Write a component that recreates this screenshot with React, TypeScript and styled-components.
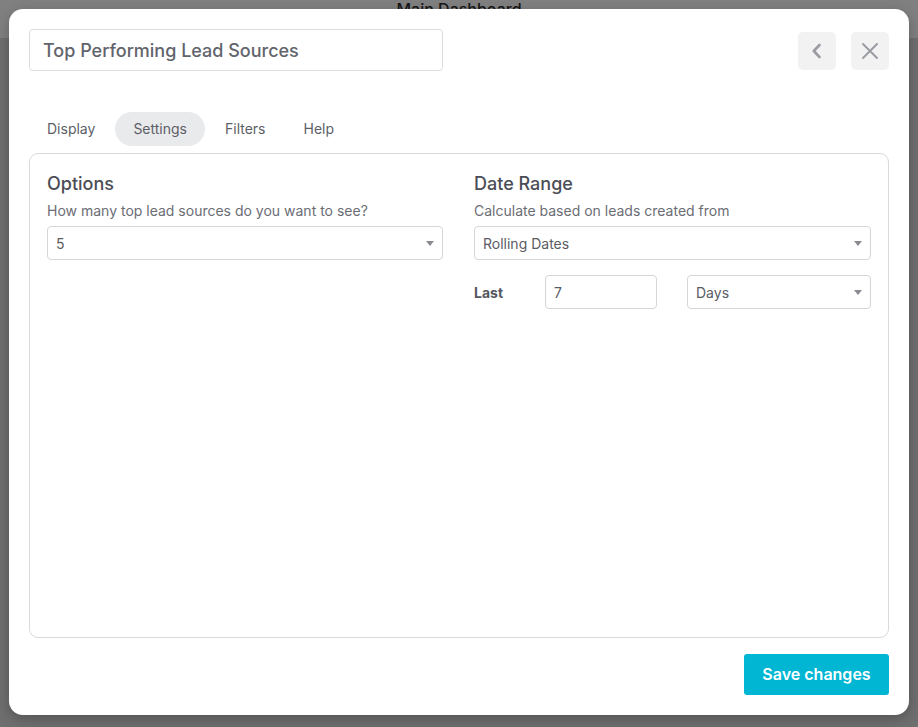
import React from "react";
import styled, { createGlobalStyle } from "styled-components";

const Global = createGlobalStyle`
  html, body { margin: 0; padding: 0; }
  body {
    width: 918px; height: 727px; overflow: hidden;
    font-family: Inter, "Noto Sans", Arial, sans-serif;
  }
  * { box-sizing: border-box; }
`;

const Page = styled.div`
  position: relative;
  width: 918px;
  height: 727px;
  background: #6f6f6f;
  display: flex;
  flex-direction: column;
`;

const PageHeader = styled.div`
  height: 38px;
  background: #808080;
  display: flex;
  justify-content: center;
  align-items: flex-start;
  font-size: 16px;
  font-weight: 500;
  color: #151515;
  line-height: 18px;
`;

const Modal = styled.div`
  position: absolute;
  left: 9px;
  top: 9px;
  width: 900px;
  height: 706px;
  background: #fff;
  border-radius: 14px;
  box-shadow: 0 4px 14px rgba(0, 0, 0, 0.25);
  padding: 20px;
  display: flex;
  flex-direction: column;
`;

const HeaderRow = styled.div`
  display: flex;
  align-items: center;
  justify-content: space-between;
`;

const TitleInput = styled.div`
  width: 414px;
  height: 42px;
  border: 1px solid #dcdcde;
  border-radius: 4px;
  padding: 0 13px;
  display: flex;
  align-items: center;
  font-size: 18px;
  font-weight: 500;
  color: #62646c;
`;

const IconGroup = styled.div`
  display: flex;
  gap: 15px;
  margin-top: 2px;
`;

const IconButton = styled.div`
  width: 38px;
  height: 38px;
  border-radius: 5px;
  background: #f2f2f3;
  display: flex;
  align-items: center;
  justify-content: center;
`;

const Tabs = styled.div`
  display: flex;
  gap: 2px;
  margin-top: 41px;
`;

const Tab = styled.div<{ $active?: boolean }>`
  height: 34px;
  padding: 0 18px 1px;
  border-radius: 17px;
  display: flex;
  align-items: center;
  font-size: 14px;
  color: #5d5f67;
  background: ${(p) => (p.$active ? "#e9eaec" : "transparent")};
`;

const Panel = styled.div`
  margin-top: 7px;
  flex: 1;
  border: 1px solid #d9d9db;
  border-radius: 9px;
  padding: 18px 17px;
  display: grid;
  grid-template-columns: 396px 397px;
  column-gap: 31px;
  align-content: start;
`;

const Column = styled.div`
  display: flex;
  flex-direction: column;
`;

const Heading = styled.div`
  font-size: 18px;
  font-weight: 500;
  color: #4b4d56;
  line-height: 24px;
`;

const Hint = styled.div`
  margin-top: 6px;
  font-size: 14px;
  color: #6b6d75;
  line-height: 18px;
`;

const Field = styled.div<{ $w?: string; $flush?: boolean }>`
  margin-top: ${(p) => (p.$flush ? "0" : "6px")};
  height: 34px;
  width: ${(p) => p.$w || "100%"};
  border: 1px solid #d6d6d9;
  border-radius: 4px;
  padding: 0 9px 0 8px;
  display: flex;
  align-items: center;
  justify-content: space-between;
  font-size: 14px;
  color: #5a5c64;
  flex-shrink: 0;
`;

const Caret = styled.span`
  width: 0;
  height: 0;
  border-left: 4px solid transparent;
  border-right: 4px solid transparent;
  border-top: 5px solid #8a8b90;
  margin-right: -1px;
`;

const Row = styled.div`
  display: flex;
  align-items: center;
  margin-top: 15px;
`;

const RowLabel = styled.div`
  width: 71px;
  font-size: 14px;
  font-weight: 700;
  color: #555760;
`;

const Spacer = styled.div`
  width: 30px;
`;

const Footer = styled.div`
  display: flex;
  justify-content: flex-end;
  margin-top: 16px;
`;

const SaveButton = styled.button`
  height: 41px;
  width: 145px;
  border: none;
  border-radius: 3px;
  background: #00b6d3;
  color: #fff;
  font-family: Inter, "Noto Sans", Arial, sans-serif;
  font-size: 16px;
  font-weight: 600;
  padding: 0 0 2px;
`;

export default function App() {
  return (
    <Page>
      <Global />
      <PageHeader>Main Dashboard</PageHeader>
      <Modal>
        <HeaderRow>
          <TitleInput>Top Performing Lead Sources</TitleInput>
          <IconGroup>
            <IconButton>
              <svg width="20" height="20" viewBox="0 0 20 20">
                <path d="M12.5 4 L6.8 10 L12.5 16" fill="none" stroke="#9b9ca2" strokeWidth="2.6" strokeLinecap="round" strokeLinejoin="round" />
              </svg>
            </IconButton>
            <IconButton>
              <svg width="20" height="20" viewBox="0 0 20 20">
                <path d="M3 3 L17 17 M17 3 L3 17" fill="none" stroke="#9b9ca2" strokeWidth="2" strokeLinecap="round" />
              </svg>
            </IconButton>
          </IconGroup>
        </HeaderRow>
        <Tabs>
          <Tab>Display</Tab>
          <Tab $active>Settings</Tab>
          <Tab>Filters</Tab>
          <Tab>Help</Tab>
        </Tabs>
        <Panel>
          <Column>
            <Heading>Options</Heading>
            <Hint>How many top lead sources do you want to see?</Hint>
            <Field>
              5<Caret />
            </Field>
          </Column>
          <Column>
            <Heading>Date Range</Heading>
            <Hint>Calculate based on leads created from</Hint>
            <Field>
              Rolling Dates<Caret />
            </Field>
            <Row>
              <RowLabel>Last</RowLabel>
              <Field $w="112px" $flush>7</Field>
              <Spacer />
              <Field $w="184px" $flush>
                Days<Caret />
              </Field>
            </Row>
          </Column>
        </Panel>
        <Footer>
          <SaveButton>Save changes</SaveButton>
        </Footer>
      </Modal>
    </Page>
  );
}
